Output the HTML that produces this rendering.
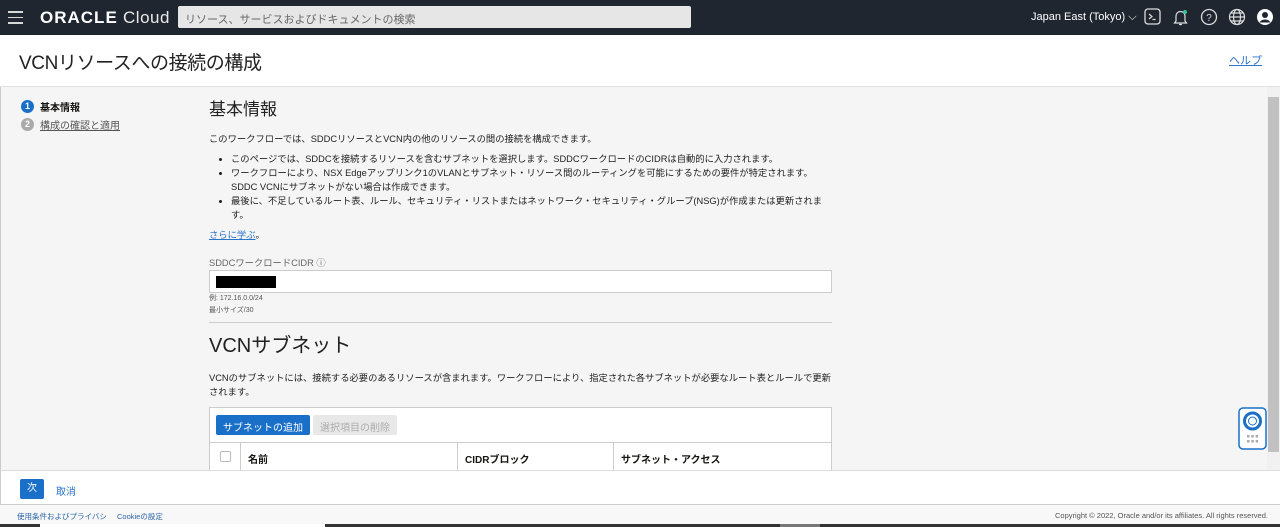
<!DOCTYPE html>
<html><head><meta charset="utf-8">
<style>
*{box-sizing:border-box;margin:0;padding:0}
body{width:1280px;height:527px;overflow:hidden;background:#fff;font-family:"Liberation Sans","Noto Sans CJK JP",sans-serif;color:#161513;position:relative}
.hdr{position:absolute;top:0;left:0;width:1280px;height:35px;background:#1f2630}
.burger{position:absolute;left:8px;top:11px;width:15px}
.burger i{display:block;height:1.5px;background:#d8d8d8;margin-bottom:4px}
.logo{position:absolute;left:40px;top:8px;color:#fff;font-size:17px;letter-spacing:0.5px}
.logo b{font-weight:bold;letter-spacing:1px}
.logo span{font-weight:normal;color:#e8e8e8}
.search{position:absolute;left:178px;top:6px;width:513px;height:22px;background:#e6e6e6;border-radius:2px;font-size:11px;color:#666;padding:5px 7px}
.region{position:absolute;left:1031px;top:11px;color:#fff;font-size:11px}
.ico{position:absolute;top:9px}
.title{position:absolute;top:35px;left:0;width:1280px;height:52px;border-bottom:1px solid #e2e2e2;background:#fff}
.title h1{position:absolute;left:19px;top:13px;font-size:19px;font-weight:normal;color:#222;letter-spacing:-0.4px}
.help{position:absolute;right:18px;top:17px;font-size:11px;color:#2a74c9;text-decoration:underline}
.main{position:absolute;top:87px;left:0;width:1267px;height:383px;background:#f5f5f5;border-left:1px solid #ccc;overflow:hidden}
.sb{position:absolute;top:87px;left:1267px;width:13px;height:383px;background:#f1f1f1}
.sb .th{position:absolute;left:1px;top:10px;width:11px;height:355px;background:#c1c1c1}
.steps{position:absolute;left:20px;top:10px;font-size:10px}
.step{display:flex;align-items:center;height:18px}
.dot{width:13px;height:13px;border-radius:50%;color:#fff;font-size:9px;text-align:center;line-height:13px;margin-right:6px;font-weight:bold}
.content{position:absolute;left:208px;top:0;width:623px}
h2{font-weight:normal;font-size:17px;color:#222}
p,li{font-size:9.3px;line-height:14px;color:#222}
ul{margin-left:22px;margin-top:6px}
a{color:#2a74c9}
.lab{font-size:9.3px;color:#666;margin-top:13px}
.inp{height:23px;border:1px solid #ccc;background:#fff;margin-top:1px;position:relative}
.inp i{position:absolute;left:6px;top:5px;width:60px;height:12px;background:#000}
.hint{font-size:7px;color:#555;line-height:12px;margin-top:0}
.tbl{position:absolute;left:0;top:320px;width:623px;height:70px;background:#fff;border:1px solid #ccc}
.btn{position:absolute;top:7px;height:20px;font-size:10px;padding:4px 7px;border-radius:2px}
</style></head><body>
<div class="hdr">
  <div class="burger"><i></i><i></i><i></i></div>
  <div class="logo"><b>ORACLE</b> <span>Cloud</span></div>
  <div class="search">リソース、サービスおよびドキュメントの検索</div>
  <div class="region">Japan East (Tokyo) ⌵</div>
  <svg class="ico" style="left:1144px;top:8px" width="17" height="17" viewBox="0 0 17 17"><rect x="1" y="1" width="15" height="15" rx="3" fill="none" stroke="#ddd" stroke-width="1.3"/><path d="M5 6l3 2.5-3 2.5M8.5 11.5h3" stroke="#ddd" fill="none" stroke-width="1.2"/></svg>
  <svg class="ico" style="left:1172px;top:8px" width="17" height="18" viewBox="0 0 17 18"><path d="M4 13V8a4.5 4.5 0 019 0v5l1.5 2h-12z M7 16.5h3" stroke="#ddd" fill="none" stroke-width="1.2"/><circle cx="13" cy="4" r="2" fill="#3cc39a"/></svg>
  <svg class="ico" style="left:1200px;top:8px" width="18" height="18" viewBox="0 0 18 18"><circle cx="9" cy="9" r="7.5" stroke="#ddd" fill="none" stroke-width="1.3"/><text x="9" y="13" font-size="10" fill="#ddd" text-anchor="middle" font-family="Liberation Sans">?</text></svg>
  <svg class="ico" style="left:1228px;top:8px" width="18" height="18" viewBox="0 0 18 18"><g stroke="#ddd" fill="none" stroke-width="1.2"><circle cx="9" cy="9" r="7.5"/><ellipse cx="9" cy="9" rx="3.5" ry="7.5"/><path d="M1.5 9h15M3 5h12M3 13h12"/></g></svg>
  <svg class="ico" style="left:1256px;top:8px" width="18" height="18" viewBox="0 0 18 18"><circle cx="9" cy="9" r="8" fill="#fff"/><circle cx="9" cy="7" r="3" fill="#1f2630"/><path d="M3.5 14.5a6 5 0 0111 0" fill="#1f2630"/></svg>
</div>
<div class="title"><h1>VCNリソースへの接続の構成</h1><span class="help">ヘルプ</span></div>
<div class="main">
  <div class="steps">
    <div class="step"><span class="dot" style="background:#1a70c9">1</span><b>基本情報</b></div>
    <div class="step"><span class="dot" style="background:#aaa">2</span><span style="text-decoration:underline;color:#555">構成の確認と適用</span></div>
  </div>
  <div class="content">
    <h2 style="margin-top:8px">基本情報</h2>
    <p style="margin-top:12px">このワークフローでは、SDDCリソースとVCN内の他のリソースの間の接続を構成できます。</p>
    <ul>
      <li>このページでは、SDDCを接続するリソースを含むサブネットを選択します。SDDCワークロードのCIDRは自動的に入力されます。</li>
      <li>ワークフローにより、NSX Edgeアップリンク1のVLANとサブネット・リソース間のルーティングを可能にするための要件が特定されます。SDDC VCNにサブネットがない場合は作成できます。</li>
      <li>最後に、不足しているルート表、ルール、セキュリティ・リストまたはネットワーク・セキュリティ・グループ(NSG)が作成または更新されます。</li>
    </ul>
    <p style="margin-top:6px"><a href="#">さらに学ぶ</a>。</p>
    <div class="lab">SDDCワークロードCIDR ⓘ</div>
    <div class="inp"><i></i></div>
    <div class="hint">例: 172.16.0.0/24<br>最小サイズ/30</div>
    <div style="border-top:1px solid #ccc;margin-top:5px"></div>
    <h2 style="margin-top:6px;font-size:20px">VCNサブネット</h2>
    <p style="margin-top:13px">VCNのサブネットには、接続する必要のあるリソースが含まれます。ワークフローにより、指定された各サブネットが必要なルート表とルールで更新されます。</p>
    <div class="tbl">
      <div class="btn" style="left:6px;background:#1a70c9;color:#fff">サブネットの追加</div>
      <div class="btn" style="left:103px;background:#e8e8e8;color:#aaa">選択項目の削除</div>
      <div style="position:absolute;top:34px;left:0;right:0;height:36px;border-top:1px solid #ccc;font-size:10px;font-weight:bold">
        <div style="position:absolute;left:10px;top:8px;width:11px;height:11px;border:1px solid #bbb;border-radius:2px"></div>
        <div style="position:absolute;left:30px;top:0;bottom:0;border-left:1px solid #ccc"></div>
        <div style="position:absolute;left:38px;top:8px">名前</div>
        <div style="position:absolute;left:247px;top:0;bottom:0;border-left:1px solid #ccc"></div>
        <div style="position:absolute;left:255px;top:8px">CIDRブロック</div>
        <div style="position:absolute;left:403px;top:0;bottom:0;border-left:1px solid #ccc"></div>
        <div style="position:absolute;left:411px;top:8px">サブネット・アクセス</div>
      </div>
    </div>
  </div>
  <svg style="position:absolute;left:1237px;top:320px" width="29" height="43" viewBox="0 0 29 43"><rect x="1" y="1" width="27" height="41" rx="4" fill="#fff" stroke="#1a70c9" stroke-width="1.5"/><circle cx="14.5" cy="14" r="8" fill="none" stroke="#1a70c9" stroke-width="3"/><circle cx="14.5" cy="14" r="4" fill="#fff" stroke="#1a70c9" stroke-width="1"/><g fill="#aaa"><rect x="9" y="28" width="2.5" height="2.5"/><rect x="13.3" y="28" width="2.5" height="2.5"/><rect x="17.6" y="28" width="2.5" height="2.5"/><rect x="9" y="33" width="2.5" height="2.5"/><rect x="13.3" y="33" width="2.5" height="2.5"/><rect x="17.6" y="33" width="2.5" height="2.5"/></g></svg>
</div>
<div class="sb"><div class="th"></div></div>
<div style="position:absolute;top:470px;left:0;width:1280px;height:35px;background:#fff;border-top:1px solid #ddd;border-bottom:1px solid #ccc;border-left:1px solid #ccc">
  <div style="position:absolute;left:19px;top:8px;width:24px;height:20px;background:#1a70c9;color:#fff;font-size:10px;text-align:center;line-height:20px;border-radius:2px">次</div>
  <a style="position:absolute;left:55px;top:12px;font-size:10px">取消</a>
</div>
<div style="position:absolute;top:505px;left:0;width:1280px;height:19px;background:#f8f8f8;font-size:7.5px;color:#2a64a9">
  <span style="position:absolute;left:17px;top:6px">使用条件およびプライバシ</span>
  <span style="position:absolute;left:117px;top:6px">Cookieの設定</span>
  <span style="position:absolute;right:12px;top:6px;color:#555">Copyright © 2022, Oracle and/or its affiliates. All rights reserved.</span>
</div>
<div style="position:absolute;top:524px;left:0;width:1280px;height:3px;background:#333">
  <div style="position:absolute;left:40px;width:285px;height:3px;background:#fff"></div>
  <div style="position:absolute;left:780px;width:40px;height:3px;background:#777"></div>
</div>
</body></html>
